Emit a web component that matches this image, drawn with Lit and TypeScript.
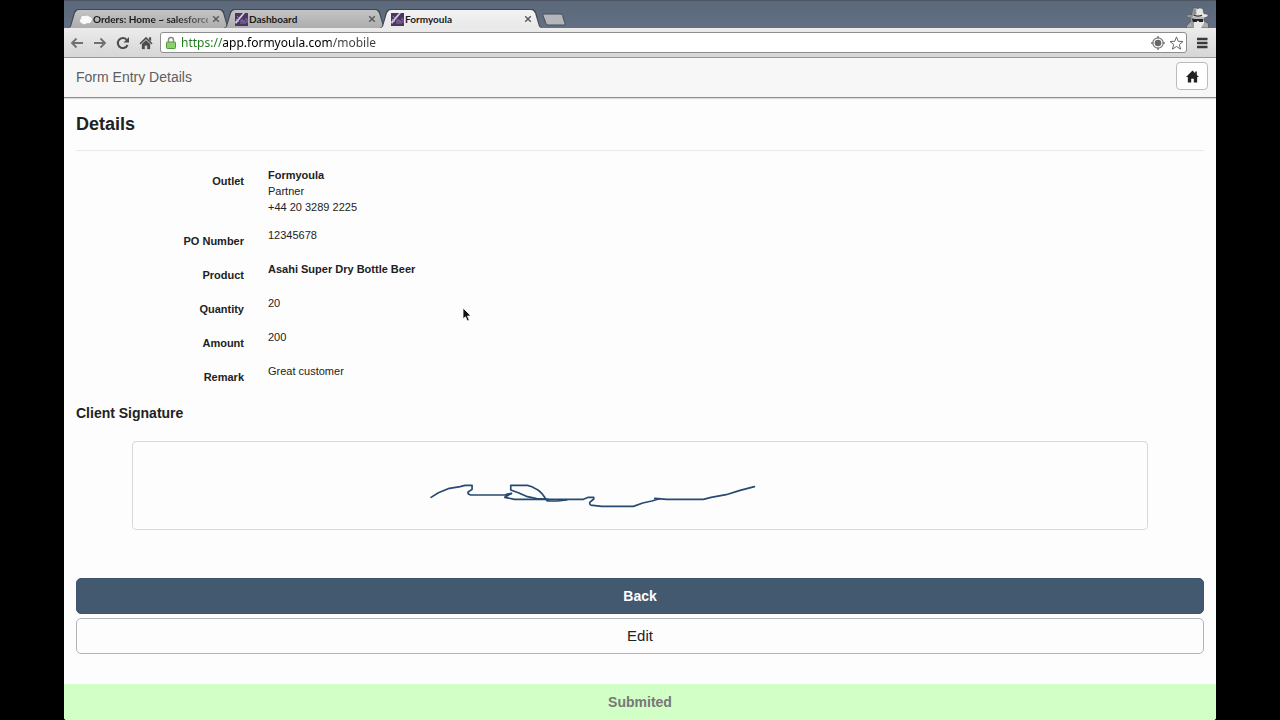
import { LitElement, html, css, svg } from "lit";
import { customElement, property } from "lit/decorators.js";

const favForm = svg`
  <rect width="13" height="13" fill="#4a3565"/>
  <path d="M0 9 L8 0 H10 L1 11 Z" fill="#d9cfe2"/>
  <path d="M2 3 L5 7 M1 6 L4 9" stroke="#a893bd" stroke-width=".8"/>
  <path d="M6 11 V7 H8 V11 M8 8 H10 V11 M10 6 H12 V10" stroke="#8e78a8" stroke-width=".9" fill="none"/>`;

const favCloud = svg`
  <path d="M3 10.5 C0 10 0 6 2 5.5 C1 3 4 1.5 6 3 C8 1.5 10 2.5 10.5 3.8 C13 3.6 14 6.500 12.500 8.500 C12 10.500 9 11 8 10.300 C6.500 12 4 12 3 10.500 Z" fill="#fafafa" stroke="#a5a5a5" stroke-width=".5"/>`;

@customElement("browser-tab")
export class BrowserTab extends LitElement {
  @property() label = "";
  @property() icon = "form";
  @property({ type: Boolean, reflect: true }) active = false;

  static styles = css`
    :host {
      display: block;
      flex: 0 1 162px;
      min-width: 0;
      position: relative;
      --edge: #3d4754;
      --face: linear-gradient(#c4c4c4, #adadad);
    }
    :host([active]) {
      z-index: 1;
      --face: linear-gradient(#f3f3f3, #e8e8e8);
    }
    .edge,
    .face {
      clip-path: polygon(0 100%, 2px 92%, 6px 16%, 8px 3%, 10px 0, calc(100% - 10px) 0, calc(100% - 8px) 3%, calc(100% - 6px) 16%, calc(100% - 2px) 92%, 100% 100%);
    }
    .edge {
      background: var(--edge);
      padding: 1px 1px 0;
    }
    .face {
      box-sizing: border-box;
      display: flex;
      align-items: center;
      height: 18px;
      padding: 0 9px 0 10px;
      background: var(--face);
    }
    .fav {
      width: 13px;
      height: 13px;
      flex: none;
    }
    .title {
      flex: 1;
      min-width: 0;
      padding: 0 0 0 1px;
      border: 0;
      background: none;
      white-space: nowrap;
      text-align: left;
      font: 700 10px/16px Lato, sans-serif;
      color: #1b1b1b;
    }
    .title.faded {
      -webkit-mask-image: linear-gradient(90deg, #000 70%, #0006);
      mask-image: linear-gradient(90deg, #000 70%, #0006);
    }
    .close {
      flex: none;
      width: 8px;
      height: 8px;
      margin-left: 4px;
      padding: 0;
      border: 0;
      background: none;
      display: flex;
    }
  `;

  render() {
    return html`<div class="edge"><div class="face">
      <svg class="fav" viewBox="0 0 13 13" aria-hidden="true">${this.icon === "form" ? favForm : favCloud}</svg>
      <button class="title ${this.icon === "cloud" ? "faded" : ""}">${this.label}</button>
      <button class="close" aria-label="Close tab">
        <svg width="8" height="8" viewBox="0 0 8 8"><path d="M1.200 1.200 L6.800 6.800 M6.800 1.200 L1.200 6.800" stroke="#5c5c5c" stroke-width="1.500"/></svg>
      </button>
    </div></div>`;
  }
}

@customElement("browser-chrome")
export class BrowserChrome extends LitElement {
  static styles = css`
    :host {
      display: block;
    }
    .strip {
      display: flex;
      align-items: flex-end;
      height: 28px;
      padding: 0 6px 0 4px;
      border-top: 1px solid #4b5460;
      box-sizing: border-box;
      background: linear-gradient(#5b6879, #637083);
    }
    browser-tab + browser-tab {
      margin-left: -6px;
    }
    .new-tab {
      align-self: center;
      margin: 10px 0 0;
      padding: 0;
      border: 0;
      background: none;
      display: flex;
    }
    .agent {
      margin-left: auto;
      display: block;
    }
    .bar {
      display: flex;
      align-items: center;
      gap: 7px;
      height: 30px;
      box-sizing: border-box;
      padding: 0 8px 0 6px;
      background: linear-gradient(#ececec, #d6d6d6);
      border-bottom: 1px solid #999;
    }
    .nav {
      display: flex;
      align-items: center;
      gap: 9px;
    }
    .icon {
      display: flex;
      padding: 0;
      border: 0;
      background: none;
    }
    .omni {
      flex: 1;
      display: flex;
      align-items: center;
      gap: 4px;
      box-sizing: border-box;
      height: 21px;
      padding: 0 2px 0 4px;
      background: #fff;
      border: 1px solid #8d8d8d;
      border-radius: 3px;
    }
    .url {
      flex: 1;
      min-width: 0;
      padding: 0;
      border: 0;
      outline: 0;
      font: 400 12px/18px "Noto Sans", sans-serif;
      color: transparent;
      background: linear-gradient(90deg, #1f7a1a 42px, #000 42px, #000 150px, #3f3f3f 150px);
      -webkit-background-clip: text;
      background-clip: text;
    }
    .menu {
      margin-left: 3px;
    }
  `;

  render() {
    return html`
      <div class="strip">
        <browser-tab icon="cloud" label="Orders: Home ~ salesforce"></browser-tab>
        <browser-tab label="Dashboard"></browser-tab>
        <browser-tab label="Formyoula" active></browser-tab>
        <button class="new-tab" aria-label="New tab">
          <svg width="24" height="13" viewBox="0 0 24 13"><path d="M2 1 H18 Q20 1 20.500 2.500 L23 10.500 Q23.300 12 21.500 12 H6.500 Q4.500 12 4 10.500 L1 2.500 Q.6 1 2 1Z" fill="#b4b6b9" stroke="#444e5b"/></svg>
        </button>
        <svg class="agent" width="25" height="21" viewBox="0 0 25 21" aria-hidden="true">
          <path d="M1.500 21 V19 L6 14 H19 L23.500 16.500 V21Z" fill="#a9aaa9" stroke="#4a4f57" stroke-width=".7"/>
          <path d="M6 9 H19 V16 L16 21 H9 L6 16Z" fill="#e8e8e6"/>
          <path d="M6 9 H9 V21 H8 L6 17Z" fill="#999b9b"/>
          <path d="M7 8 L8 2 Q9 .8 11 1 L12.500 1.800 L14.500 1 Q17.500 .8 18 2.500 L18.800 6.500 L23 7.500 V9.500 L19 11 H7 L2 9.500 V8.300Z" fill="#e6e6e2" stroke="#4a4f57" stroke-width=".6"/>
          <path d="M7.200 8 L8.200 2.200 Q9 1.200 11 1.300 L11.500 7 L9 8.500 L7 10.500 L2.500 9.300 V8.500Z" fill="#8f9090"/>
          <path d="M9 8.300 Q13 9.800 17 8.300" fill="none" stroke="#333" stroke-width="1.300"/>
          <path d="M7 12 H18.500 L18 15 H14.300 L13.300 13.800 H12.500 L11.500 15 H8Z" fill="#222"/>
        </svg>
      </div>
      <div class="bar">
        <div class="nav">
          <button class="icon" aria-label="Back"><svg width="14" height="14" viewBox="0 0 14 14"><path d="M13 7 H2 M6.500 2.500 L2 7 L6.500 11.500" fill="none" stroke="#707070" stroke-width="1.800"/></svg></button>
          <button class="icon" aria-label="Forward"><svg width="14" height="14" viewBox="0 0 14 14"><path d="M1 7 H12 M7.500 2.500 L12 7 L7.500 11.500" fill="none" stroke="#707070" stroke-width="1.800"/></svg></button>
          <button class="icon" aria-label="Reload"><svg width="14" height="14" viewBox="0 0 14 14"><path d="M11.500 9 A5 5 0 1 1 10.500 3.600" fill="none" stroke="#4c4c4c" stroke-width="2"/><path d="M13 1 V6.500 H7.500Z" fill="#4c4c4c"/></svg></button>
          <button class="icon" aria-label="Home"><svg width="14" height="14" viewBox="0 0 14 14"><path d="M7 1 L13.300 7.300 L12.500 8.200 L7 3 L1.500 8.200 L.7 7.300Z M10 1.500 H12 V5 L10 3.200Z M3 8 L7 4.200 L11 8 V13 H8.300 V9.500 H5.700 V13 H3Z" fill="#4c4c4c" stroke="#4c4c4c" stroke-width=".3"/></svg></button>
        </div>
        <div class="omni">
          <svg width="12" height="14" viewBox="0 0 12 14" aria-hidden="true">
            <path d="M3.500 7 V4 Q3.500 1.500 6 1.500 Q8.500 1.500 8.500 4 V7" fill="none" stroke="#8b8b8b" stroke-width="1.500"/>
            <rect x="1.500" y="6" width="9" height="6.500" rx=".8" fill="#8ccf6c" stroke="#4f9a3c"/>
          </svg>
          <input class="url" type="text" aria-label="Address" value="https://app.formyoula.com/mobile" />
          <button class="icon" aria-label="Location"><svg width="14" height="14" viewBox="0 0 14 14"><circle cx="7" cy="7" r="5.200" fill="none" stroke="#777" stroke-width="1.200"/><circle cx="7" cy="7" r="3.300" fill="#666"/><path d="M7 0 V2.500 M7 11.500 V14 M0 7 H2.500 M11.500 7 H14" stroke="#777" stroke-width="1.400"/></svg></button>
          <button class="icon" aria-label="Bookmark"><svg width="15" height="14" viewBox="0 0 15 14"><path d="M7.500 .9 L9.200 5.300 L14 5.500 L10.300 8.500 L11.600 13.100 L7.500 10.500 L3.400 13.100 L4.700 8.500 L1 5.500 L5.800 5.300Z" fill="#fff" stroke="#666" stroke-width="1"/></svg></button>
        </div>
        <button class="icon menu" aria-label="Menu"><svg width="11" height="12" viewBox="0 0 11 12"><path d="M0 2 H10.500 M0 6 H10.500 M0 10 H10.500" stroke="#3a3a3a" stroke-width="2.300"/></svg></button>
      </div>`;
  }
}

interface Field {
  name: string;
  strong?: string;
  lines?: string[];
}

const FIELDS: Field[] = [
  { name: "Outlet", strong: "Formyoula", lines: ["Partner", "+44 20 3289 2225"] },
  { name: "PO Number", lines: ["12345678"] },
  { name: "Product", strong: "Asahi Super Dry Bottle Beer" },
  { name: "Quantity", lines: ["20"] },
  { name: "Amount", lines: ["200"] },
  { name: "Remark", lines: ["Great customer"] },
];

@customElement("app-root")
export class AppRoot extends LitElement {
  static styles = css`
    :host {
      display: block;
      box-sizing: border-box;
      min-height: 100vh;
      padding: 0 5%;
      background: #000;
      font-family: "Liberation Sans", Arial, sans-serif;
      color: #222;
    }
    .window {
      display: flex;
      flex-direction: column;
      min-height: 100vh;
      position: relative;
      overflow: hidden;
      border-radius: 0 0 3px 3px;
      background: #fdfdfd;
    }
    .top {
      display: flex;
      align-items: flex-start;
      justify-content: space-between;
      box-sizing: border-box;
      height: 40px;
      padding: 4px 8px 0 12px;
      background: #f7f7f7;
      border-bottom: 1px solid #8e8e8e;
      box-shadow: 0 1px 1px #ddd;
    }
    .top h1 {
      margin: 0;
      font-size: 14px;
      line-height: 30px;
      font-weight: 400;
      color: #5e5e5e;
    }
    .home {
      display: flex;
      align-items: center;
      justify-content: center;
      width: 32px;
      height: 28px;
      box-sizing: border-box;
      padding: 0;
      background: #fff;
      border: 1px solid #bbb;
      border-radius: 4px;
    }
    .content {
      padding: 14px 12px 0;
    }
    h2 {
      margin: 0;
      padding-bottom: 14px;
      border-bottom: 1px solid #eaeaea;
      font-size: 18px;
      line-height: 24px;
    }
    .fields {
      display: flex;
      flex-direction: column;
      gap: 12px;
      margin: 16px 0 0;
      font-size: 11px;
      line-height: 16px;
    }
    .row {
      display: grid;
      grid-template-columns: 168px 1fr;
      column-gap: 24px;
    }
    dt {
      padding-top: 6px;
      text-align: right;
      font-weight: 700;
    }
    dd {
      margin: 0;
    }
    .line {
      display: block;
    }
    h3 {
      margin: 18px 0;
      font-size: 14px;
      line-height: 20px;
    }
    .signature {
      margin: 0 5%;
      border: 1px solid #d8d8d8;
      border-radius: 4px;
    }
    .ink {
      display: block;
      width: 100%;
      height: auto;
    }
    .actions {
      display: flex;
      flex-direction: column;
      gap: 4px;
      margin: 48px 0 28px;
    }
    .btn {
      height: 36px;
      padding: 0;
      border: 1px solid #b3b3b3;
      border-radius: 5px;
      background: #fdfdfd;
      font: 400 15px/20px "Liberation Sans", Arial, sans-serif;
      color: #222;
    }
    .btn.primary {
      border-color: #3d546d;
      background: #43596f;
      color: #fff;
      font-size: 14px;
      font-weight: 700;
    }
    .status {
      margin-top: auto;
      padding: 8px 0;
      background: #d1ffc6;
      text-align: center;
      font-size: 14px;
      line-height: 20px;
      font-weight: 700;
      color: #777;
    }
    .pointer {
      position: absolute;
      left: 398px;
      top: 307px;
    }
  `;

  render() {
    return html`
      <div class="window">
        <browser-chrome></browser-chrome>
        <header class="top">
          <h1>Form Entry Details</h1>
          <button class="home" aria-label="Home">
            <svg width="13" height="13" viewBox="0 0 12 12"><path d="M6 .5 L8.500 3 V1.300 H10 V4.500 L12 6.500 H10.300 V11.500 H7.200 V8 H4.800 V11.500 H1.700 V6.500 H0Z" fill="#222"/></svg>
          </button>
        </header>
        <main class="content">
          <h2>Details</h2>
          <dl class="fields">
            ${FIELDS.map(
              (f) => html`<div class="row">
                <dt>${f.name}</dt>
                <dd>
                  ${f.strong ? html`<strong class="line">${f.strong}</strong>` : ""}
                  ${(f.lines ?? []).map((l) => html`<span class="line">${l}</span>`)}
                </dd>
              </div>`
            )}
          </dl>
          <h3>Client Signature</h3>
          <div class="signature">
            <svg class="ink" viewBox="0 0 1013 87" role="img" aria-label="Client signature">
              <g transform="translate(287 18) scale(.3333)" fill="none" stroke="#264a70" stroke-width="5" stroke-linejoin="round" stroke-linecap="round">
                <path d="M33 112 L55 98 L84 86 L120 80 L135 76 H156 V88 L144 96 Q142 103 152 105 H255 L274 100 L254 112 L283 118 H490 L505 112 H521 V117 L509 127 Q508 137 518 136 L545 139 H640 L668 129 L695 123 L718 116"/>
                <path d="M258 104 L274 101 M380 122 Q365 96 350 88 Q335 78 322 76 H272 V90 L295 98 L322 110 L350 116 L384 118 V123 H412 L440 120"/>
                <path d="M704 115 L740 118 H850 L873 112 L918 104 L960 91 L1003 80"/>
              </g>
            </svg>
          </div>
          <div class="actions">
            <button class="btn primary">Back</button>
            <button class="btn">Edit</button>
          </div>
        </main>
        <footer class="status">Submited</footer>
        <svg class="pointer" width="11" height="16" viewBox="0 0 11 16" aria-hidden="true"><path d="M1 1 V12 L3.500 9.800 L5.300 14 L7.300 13.200 L5.500 9 H9Z" fill="#111" stroke="#fff" stroke-width=".8"/></svg>
      </div>`;
  }
}
